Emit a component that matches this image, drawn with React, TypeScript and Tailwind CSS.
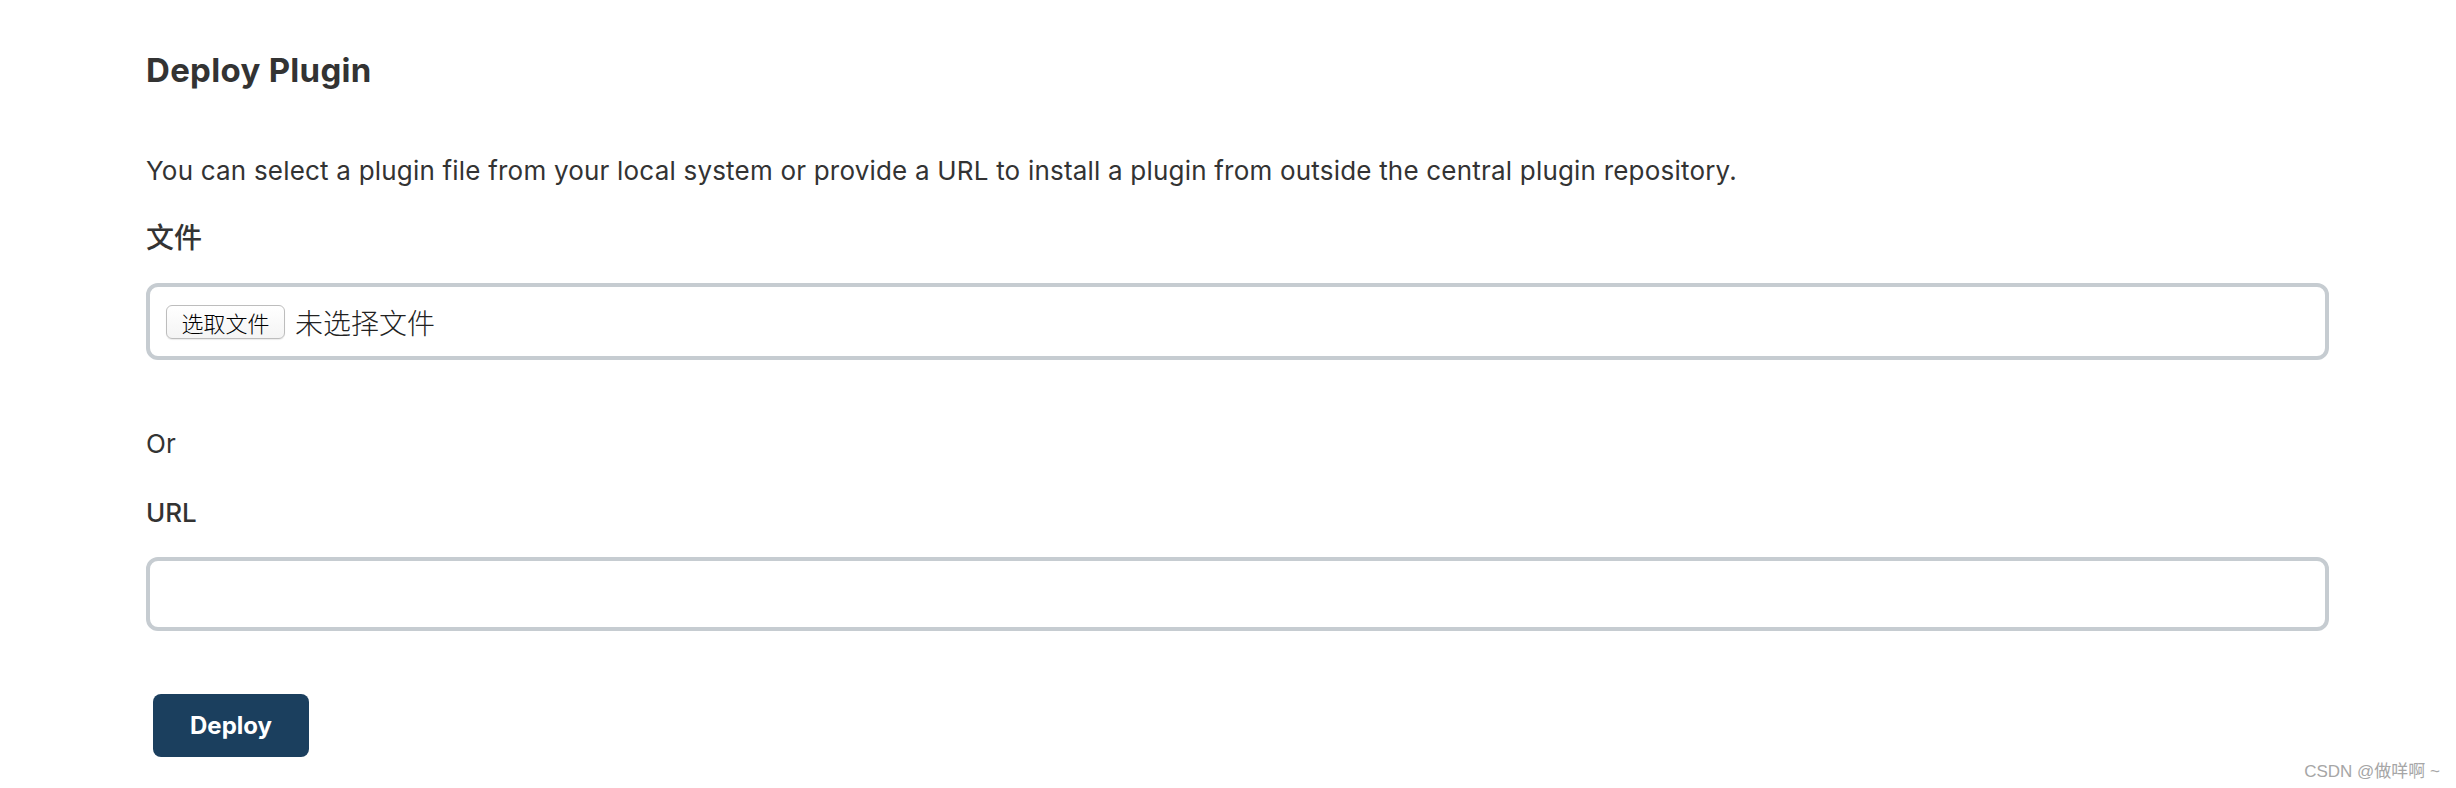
import React from "react"

const sans = "font-['Inter','Noto_Sans_CJK_SC',sans-serif]"
const cjk = "font-['Noto_Sans_CJK_SC','Inter',sans-serif]"

export default function App() {
  return (
    <div className={`relative w-[2456px] h-[788px] overflow-hidden bg-white pl-[146px] text-[#333333] ${sans}`}>
      <h1 className="pt-[50px] text-[33px] leading-[40px] font-bold tracking-[0.3px]">Deploy Plugin</h1>

      <p className="mt-[63px] text-[26px] leading-[36px] tracking-[0.2px]">
        You can select a plugin file from your local system or provide a URL to install a plugin from outside the central plugin repository.
      </p>

      <div className={`mt-[29px] text-[28px] leading-[36px] font-medium ${cjk}`}>文件</div>

      {/* file chooser */}
      <div className="mt-[29px] flex h-[77px] w-[2183px] items-center rounded-[12px] border-[4px] border-[#c6ccd1] pl-[16px]">
        <button
          className={`flex h-[34px] w-[119px] items-center justify-center rounded-[6px] border border-[#bdbdbd] bg-gradient-to-b from-white to-[#f4f4f4] text-[22px] leading-[34px] font-light text-black shadow-[0_1px_1px_rgba(0,0,0,0.08)] ${cjk}`}
        >
          选取文件
        </button>
        <span className={`ml-[10px] text-[28px] leading-[36px] font-light text-[#222222] ${cjk}`}>未选择文件</span>
      </div>

      <div className="mt-[66px] text-[26px] leading-[36px]">Or</div>

      <div className="mt-[33px] text-[26px] leading-[36px] font-medium">URL</div>

      <input
        type="text"
        className="mt-[26px] block h-[74px] w-[2183px] rounded-[12px] border-[4px] border-[#c6ccd1] bg-white px-[16px] text-[26px] outline-none"
      />

      <button className="ml-[7px] mt-[63px] flex h-[63px] w-[156px] items-center justify-center rounded-[8px] bg-[#1b3f5e] text-[24px] font-bold text-white">
        Deploy
      </button>

      <div className="absolute bottom-[6px] right-[16px] font-['Liberation_Sans','Noto_Sans_CJK_SC',sans-serif] text-[17px] leading-[20px] text-[#a6a6a6]">
        CSDN @做咩啊 ~
      </div>
    </div>
  )
}
